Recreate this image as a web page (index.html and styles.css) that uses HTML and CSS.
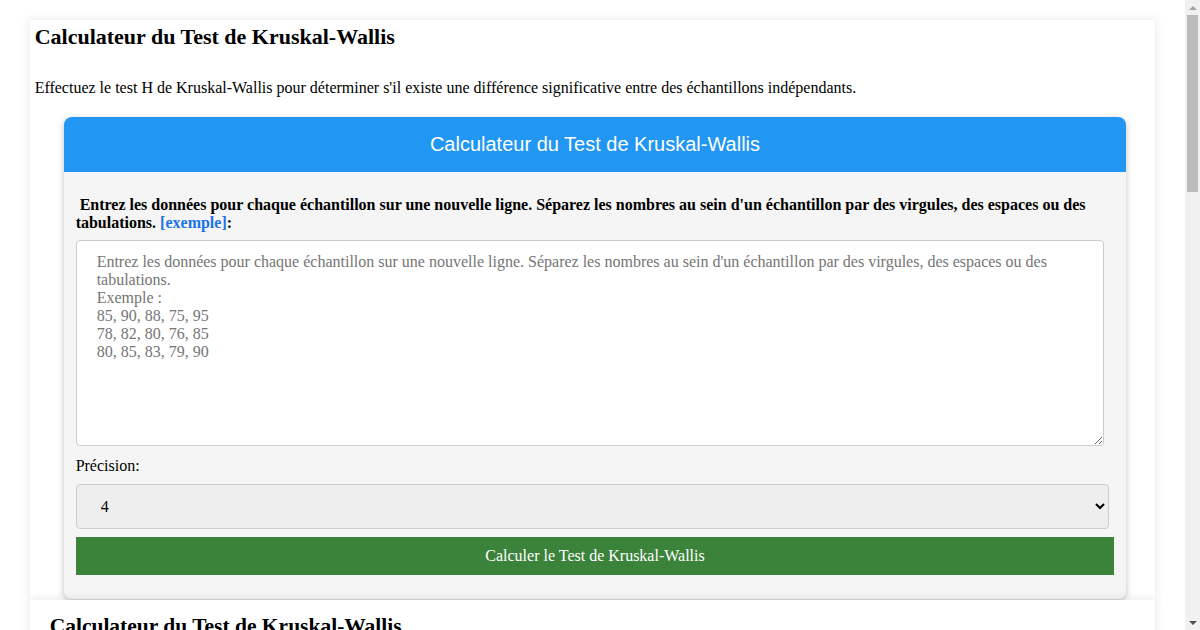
FILE: index.html
```html
<!DOCTYPE html>
<html lang="fr">
<head>
<meta charset="utf-8">
<title>Calculateur du Test de Kruskal-Wallis</title>
<link rel="stylesheet" href="styles.css">
</head>
<body>
<div class="viewport">
  <div class="page">
    <h2 class="page-title">Calculateur du Test de Kruskal-Wallis</h2>
    <p class="intro">Effectuez le test H de Kruskal-Wallis pour déterminer s'il existe une différence significative entre des échantillons indépendants.</p>
    <div class="card">
      <div class="card-header">Calculateur du Test de Kruskal-Wallis</div>
      <div class="card-body">
        <label class="data-label" for="data">&nbsp;Entrez les données pour chaque échantillon sur une nouvelle ligne. Séparez les nombres au sein d'un échantillon par des virgules, des espaces ou des tabulations. <a href="#" class="example-link">[exemple]</a>:</label>
        <textarea id="data" class="data-input" placeholder="Entrez les données pour chaque échantillon sur une nouvelle ligne. Séparez les nombres au sein d'un échantillon par des virgules, des espaces ou des tabulations.
Exemple :
85, 90, 88, 75, 95
78, 82, 80, 76, 85
80, 85, 83, 79, 90"></textarea>
        <label class="precision-label" for="precision">Précision:</label>
        <select id="precision" class="precision-select">
          <option>1</option>
          <option>2</option>
          <option>3</option>
          <option selected>4</option>
          <option>5</option>
          <option>6</option>
        </select>
        <button class="calc-btn" type="button">Calculer le Test de Kruskal-Wallis</button>
      </div>
    </div>
  </div>
  <div class="page page-second">
    <h2 class="page-title second-title">Calculateur du Test de Kruskal-Wallis</h2>
    <p class="intro">Le test de Kruskal-Wallis est une méthode non paramétrique permettant de comparer trois échantillons indépendants ou plus.</p>
    <p class="intro">Il s'agit d'une alternative à l'ANOVA à un facteur lorsque les hypothèses de normalité ne sont pas satisfaites.</p>
  </div>
</div>
<div class="scrollbar" aria-hidden="true">
  <div class="sb-btn"><span class="sb-arrow-up"></span></div>
  <div class="sb-thumb"></div>
  <div class="sb-track"></div>
  <div class="sb-btn"><span class="sb-arrow-down"></span></div>
</div>
</body>
</html>
```

FILE: styles.css
```css
html, body {
  margin: 0;
  padding: 0;
  background: #ffffff;
  font-family: "Liberation Serif", "Times New Roman", serif;
  font-size: 16px;
  color: #000;
}

body {
  display: flex;
  align-items: flex-start;
}

.viewport {
  flex: 1;
  min-width: 0;
}

/* fake classic scrollbar */
.scrollbar {
  flex: none;
  width: 15px;
  height: 630px;
  background: #f1f1f1;
  display: flex;
  flex-direction: column;
}

.sb-btn {
  height: 15px;
  display: flex;
  align-items: center;
  justify-content: center;
}

.sb-arrow-up {
  width: 0;
  height: 0;
  border-left: 4px solid transparent;
  border-right: 4px solid transparent;
  border-bottom: 4px solid #a3a3a3;
}

.sb-arrow-down {
  width: 0;
  height: 0;
  border-left: 4px solid transparent;
  border-right: 4px solid transparent;
  border-top: 4px solid #505050;
}

.sb-thumb {
  height: 177px;
  margin: 0 2px;
  background: #bcbcbc;
}

.sb-track {
  flex: 1;
}

.page {
  width: 95%;
  margin: 20px auto 0;
  padding: 4px 5px 1px;
  box-sizing: border-box;
  background: #fff;
  box-shadow: 0 0 10px rgba(0, 0, 0, 0.1);
}

.page-title {
  font-size: 22px;
  font-weight: bold;
  margin: 0 0 29px;
}

.intro {
  margin: 0;
  line-height: 18.4px;
}

.card {
  margin: 20px 24px 0 29px;
  background: #f5f5f5;
  border-radius: 8px;
  box-shadow: 0 2px 6px rgba(0, 0, 0, 0.25);
  overflow: hidden;
}

.card-header {
  background: #2196f3;
  color: #fff;
  text-align: center;
  font-family: "Liberation Sans", Arial, sans-serif;
  font-size: 20px;
  line-height: 23px;
  padding: 16px 12px;
}

.card-body {
  padding: 24px 12px 24px;
  display: flex;
  flex-direction: column;
  align-items: flex-start;
}

.data-label {
  font-weight: bold;
  line-height: 18px;
  margin-bottom: 8px;
}

.example-link {
  color: #1a73e8;
  text-decoration: none;
}

.data-input {
  width: calc(100% - 10px);
  height: 206px;
  box-sizing: border-box;
  padding: 12px 20px;
  border: 1px solid #ccc;
  border-radius: 4px;
  background: #fff;
  font-family: "Liberation Serif", "Times New Roman", serif;
  font-size: 16px;
  line-height: 18px;
  margin: 0;
}

.data-input::placeholder {
  color: #757575;
}

.precision-label {
  margin-top: 11px;
  line-height: 18px;
  margin-bottom: 9px;
}

.precision-select {
  width: calc(100% - 5px);
  height: 45px;
  box-sizing: border-box;
  padding: 0 16px 0 20px;
  border: 1px solid #ccc;
  border-radius: 4px;
  background: #eee;
  font-family: "Liberation Serif", "Times New Roman", serif;
  font-size: 16px;
  color: #000;
  margin: 0;
}

.calc-btn {
  width: 100%;
  height: 38px;
  margin-top: 8px;
  border: none;
  background: #3b833a;
  color: #fff;
  font-family: "Liberation Serif", "Times New Roman", serif;
  font-size: 16px;
  cursor: pointer;
}

.page-second {
  margin-top: 0;
  padding: 14px 20px 20px;
}

.second-title {
  font-size: 21.5px;
  margin-bottom: 20px;
}

.page-second .intro {
  margin-bottom: 16px;
}
```
